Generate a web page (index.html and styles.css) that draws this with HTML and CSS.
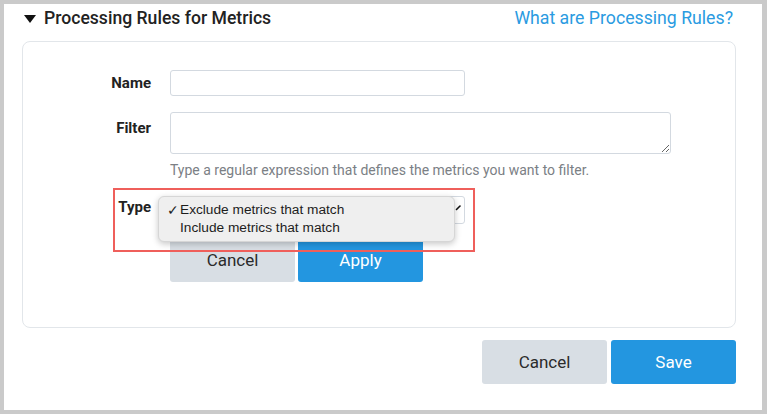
FILE: index.html
```html
<!DOCTYPE html>
<html>
<head>
<meta charset="utf-8">
<link rel="stylesheet" href="styles.css">
</head>
<body>
<div class="panel">
  <div class="header">
    <div class="title">
      <svg class="caret" width="12" height="8" viewBox="0 0 12 8"><polygon points="0,0 12,0 6,8" fill="#111"/></svg>
      <span>Processing Rules for Metrics</span>
    </div>
    <a class="help-link" href="#">What are Processing Rules?</a>
  </div>
  <div class="card">
    <div class="form">
      <label class="label label-mid">Name</label>
      <div class="field"><input class="input" type="text"></div>

      <label class="label label-top">Filter</label>
      <div class="field">
        <textarea class="textarea"></textarea>
        <div class="hint">Type a regular expression that defines the metrics you want to filter.</div>
      </div>

      <label class="label label-type">Type</label>
      <div class="field type-field">
        <div class="select">
          <svg class="select-arrow" width="8" height="8" viewBox="0 0 8 8"><path d="M1.5 6.5 L5 3" stroke="#111" stroke-width="1.6" stroke-linecap="round"/></svg>
        </div>
        <div class="menu">
          <div class="menu-item"><span class="check">✓</span>Exclude metrics that match</div>
          <div class="menu-item"><span class="check"></span>Include metrics that match</div>
        </div>
      </div>

      <div></div>
      <div class="field actions">
        <button class="btn btn-grey">Cancel</button>
        <button class="btn btn-blue">Apply</button>
      </div>
    </div>
    <div class="highlight"></div>
  </div>
  <div class="footer">
    <button class="btn btn-grey">Cancel</button>
    <button class="btn btn-blue">Save</button>
  </div>
</div>
</body>
</html>
```

FILE: styles.css
```css
html, body {
  margin: 0;
  padding: 0;
}
body {
  background: #cacaca;
  width: 767px;
  height: 414px;
  padding: 4px 5px 4px 4px;
  box-sizing: border-box;
  font-family: Roboto, "Liberation Sans", sans-serif;
  color: #333;
}
.panel {
  background: #fff;
  height: 406px;
  padding: 4px 26px 0 18px;
  box-sizing: border-box;
}
.header {
  display: flex;
  justify-content: space-between;
  align-items: center;
  height: 20px;
  margin-bottom: 13px;
}
.title {
  display: flex;
  align-items: center;
  font-size: 17.6px;
  font-weight: 500;
  color: #222;
  line-height: 20px;
  padding-left: 2px;
}
.caret {
  margin-right: 8px;
  margin-top: 1px;
}
.help-link {
  font-size: 17.7px;
  color: #2a9be1;
  text-decoration: none;
  line-height: 20px;
  margin-right: 3px;
}
.card {
  position: relative;
  border: 1px solid #e2e6ea;
  border-radius: 8px;
  padding: 28px 0 45px 0;
  width: 714px;
  box-sizing: border-box;
}
.form {
  display: grid;
  grid-template-columns: 128px 1fr;
  column-gap: 19px;
  row-gap: 16px;
}
.label {
  text-align: right;
  font-size: 15px;
  font-weight: 700;
  color: #222;
}
.label-mid {
  line-height: 26px;
}
.label-top {
  padding-top: 8px;
  line-height: 16px;
}
.label-type {
  padding-top: 3px;
  line-height: 16px;
}
.field {
  position: relative;
}
.input {
  display: block;
  width: 295px;
  height: 26px;
  box-sizing: border-box;
  border: 1px solid #d3d9e0;
  border-radius: 3px;
  margin: 0;
  padding: 0 8px;
  outline: none;
}
.textarea {
  display: block;
  width: 501px;
  height: 42px;
  box-sizing: border-box;
  border: 1px solid #d3d9e0;
  border-radius: 3px;
  margin: 0;
  padding: 4px 8px;
  font-family: inherit;
  outline: none;
}
.hint {
  margin-top: 7px;
  margin-bottom: 1px;
  font-size: 14px;
  line-height: 18px;
  color: #7b8085;
}
.select {
  width: 295px;
  height: 28px;
  box-sizing: border-box;
  border: 1px solid #d3d9e0;
  border-radius: 3px;
  position: relative;
  background: #fff;
}
.select-arrow {
  position: absolute;
  right: 1px;
  top: 6px;
}
.menu {
  position: absolute;
  left: -12px;
  top: 0;
  width: 297px;
  height: 46px;
  box-sizing: border-box;
  background: #efefef;
  border: 1px solid #d6d6d6;
  border-radius: 6px;
  box-shadow: 0 2px 6px rgba(0, 0, 0, 0.22);
  padding-top: 4px;
  font-family: "Liberation Sans", Arial, sans-serif;
  font-size: 13.7px;
  color: #1d1d1d;
  z-index: 2;
}
.menu-item {
  display: flex;
  align-items: center;
  height: 18px;
  line-height: 18px;
}
.check {
  display: inline-block;
  width: 13px;
  margin-left: 8px;
  font-size: 14px;
}
.actions {
  display: flex;
  gap: 3px;
  margin-top: -3px;
}
.btn {
  width: 125px;
  height: 45px;
  border: none;
  border-radius: 3px;
  font-family: Roboto, "Liberation Sans", sans-serif;
  font-size: 17px;
  cursor: pointer;
  margin: 0;
  padding: 0;
}
.btn-grey {
  background: #d8dee4;
  color: #2b2b2b;
}
.btn-blue {
  background: #2396e0;
  color: #fff;
}
.highlight {
  position: absolute;
  left: 90px;
  top: 146px;
  width: 362px;
  height: 64px;
  box-sizing: border-box;
  border: 2px solid #ef5f5b;
  z-index: 3;
  pointer-events: none;
}
.footer {
  display: flex;
  justify-content: flex-end;
  gap: 4px;
  margin-top: 12px;
  width: 714px;
}
.footer .btn {
  height: 44px;
}
```
